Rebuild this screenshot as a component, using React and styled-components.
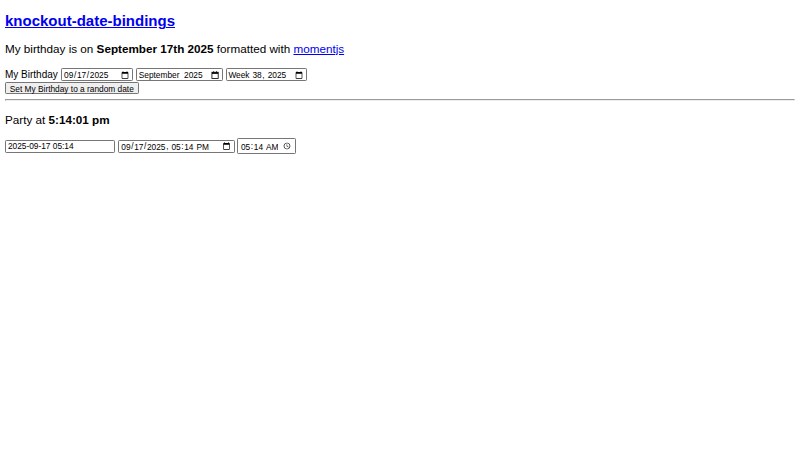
import React from "react";
import styled, { createGlobalStyle } from "styled-components";

const Global = createGlobalStyle`
  html, body { margin: 0; padding: 0; background: #fff; }
  body { font-family: "Liberation Sans", Arial, sans-serif; color: #000; }
`;

const Page = styled.div`
  zoom: 0.625;
  margin: 8px;
  font-size: 16px;
`;

const Title = styled.h2`
  font-size: 1.5em;
  font-weight: bold;
  margin: 0.83em 0;
`;

const Link = styled.a`
  color: #0000ee;
  text-decoration: underline;
`;

const Heading = styled.h3`
  font-size: 1.17em;
  font-weight: normal;
  margin: 1em 0;
`;

const FieldRow = styled.div`
  padding-top: ${(p) => p.$pt || 0}px;
`;

const Label = styled.label`
  font-size: 16px;
`;

const Input = styled.input`
  box-sizing: border-box;
  width: ${(p) => p.$w}px;
  height: ${(p) => p.$h || 21}px;
  padding: 1px 3px;
  border: 1px solid #767676;
  border-radius: 2px;
  font-family: "Liberation Sans", Arial, sans-serif;
  font-size: 13.333px;
  color: #000;
  background: #fff;

  &::-webkit-calendar-picker-indicator {
    margin-left: 4px;
  }
`;

const FakeInput = styled.span`
  display: inline-flex;
  align-items: center;
  justify-content: space-between;
  box-sizing: border-box;
  width: ${(p) => p.$w}px;
  height: 21px;
  padding: 1px 4px 1px 3px;
  border: 1px solid #767676;
  border-radius: 2px;
  font-family: "Liberation Sans", Arial, sans-serif;
  font-size: 13.333px;
  color: #000;
  background: #fff;
  white-space: pre;
`;

const Button = styled.button`
  box-sizing: border-box;
  height: 20px;
  margin-top: 1px;
  padding: 1px 6px;
  border: 1px solid #767676;
  border-radius: 2px;
  background: #efefef;
  color: #000;
  font-family: "Liberation Sans", Arial, sans-serif;
  font-size: 13.333px;
`;

const Rule = styled.hr`
  margin: 8px 0 7px;
`;

function CalendarIcon() {
  return (
    <svg width="13" height="13" viewBox="0 0 13 13">
      <rect x="1.5" y="2" width="10" height="10" fill="none" stroke="#000" strokeWidth="1.3" />
      <rect x="1.5" y="2" width="10" height="2.6" fill="#000" />
      <rect x="3.5" y="0.5" width="1.4" height="2" fill="#000" />
      <rect x="8.1" y="0.5" width="1.4" height="2" fill="#000" />
    </svg>
  );
}

export default function App() {
  return (
    <>
      <Global />
      <Page>
        <Title>
          <Link href="#">knockout-date-bindings</Link>
        </Title>
        <Heading>
          My birthday is on <strong>September 17th 2025</strong> formatted with{" "}
          <Link href="#">momentjs</Link>
        </Heading>
        <FieldRow $pt={2.5}>
          <Label>
            My Birthday <Input type="date" $w={116} defaultValue="2025-09-17" />{" "}
            <FakeInput $w={139}>
              <span>{"September  2025"}</span>
              <CalendarIcon />
            </FakeInput>{" "}
            <Input type="week" $w={131} defaultValue="2025-W38" />
          </Label>
          <br />
          <Button>Set My Birthday to a random date</Button>
        </FieldRow>
        <Rule />
        <Heading>
          Party at <strong>5:14:01 pm</strong>
        </Heading>
        <FieldRow $pt={1}>
          <Input type="text" $w={176} defaultValue="2025-09-17 05:14" />{" "}
          <Input type="datetime-local" $w={187} defaultValue="2025-09-17T17:14" />{" "}
          <Input type="time" $w={94} $h={25} defaultValue="05:14" />
        </FieldRow>
      </Page>
    </>
  );
}
